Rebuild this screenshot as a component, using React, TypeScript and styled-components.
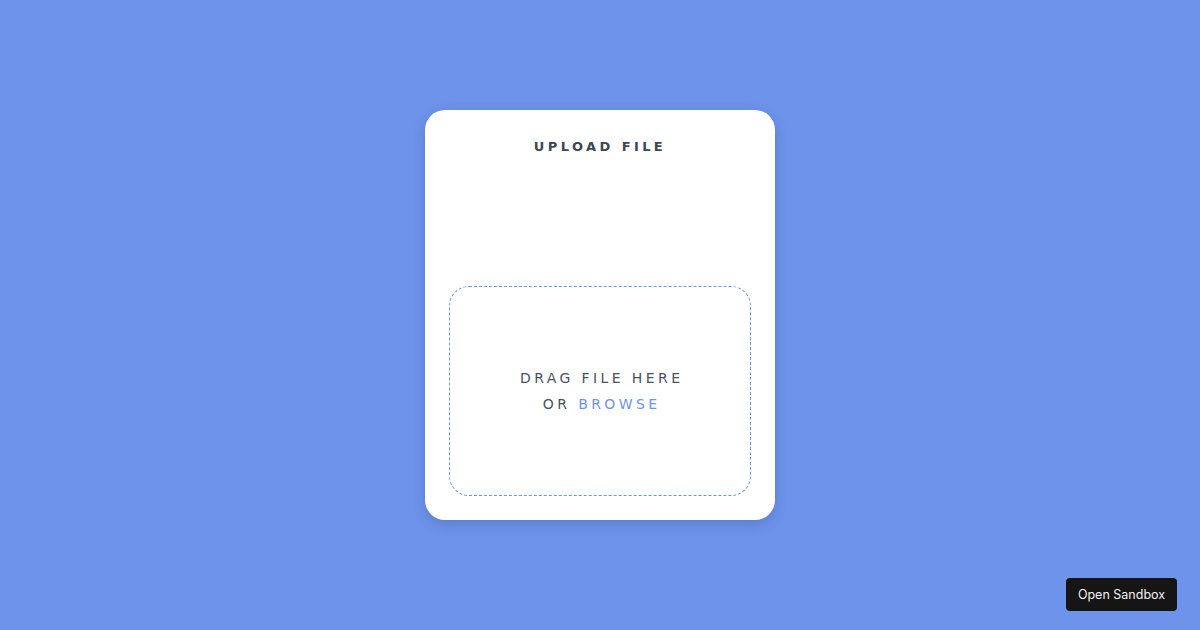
import React from "react";
import styled, { createGlobalStyle } from "styled-components";

const Global = createGlobalStyle`
  html, body {
    margin: 0;
    padding: 0;
    height: 100%;
  }
  body {
    background: #6d93ea;
    font-family: "DejaVu Sans", "Open Sans", sans-serif;
  }
  #root {
    height: 100%;
  }
`;

const Page = styled.div`
  height: 100vh;
  display: flex;
  align-items: center;
  justify-content: center;
  position: relative;
`;

const Card = styled.div`
  width: 350px;
  height: 410px;
  box-sizing: border-box;
  background: #fff;
  border-radius: 20px;
  box-shadow: 0 4px 12px rgba(40, 60, 120, 0.25);
  padding: 28px 24px 24px;
  display: flex;
  flex-direction: column;
`;

const Title = styled.h1`
  margin: 0;
  text-align: center;
  font-size: 13px;
  font-weight: 700;
  letter-spacing: 3.4px;
  color: #3e4654;
  line-height: 18px;
`;

const DropZone = styled.div`
  margin-top: auto;
  height: 210px;
  box-sizing: border-box;
  border: 1px dashed #6d93ea;
  border-radius: 20px;
  display: flex;
  flex-direction: column;
  align-items: center;
  justify-content: center;
  text-align: center;
`;

const Line = styled.div`
  font-size: 14px;
  font-weight: 400;
  letter-spacing: 3.4px;
  line-height: 26px;
  color: #4a5160;
  padding-left: 3.4px;
`;

const Browse = styled.span`
  color: #6d93ea;
`;

const SandboxButton = styled.button`
  position: absolute;
  right: 23px;
  bottom: 19px;
  width: 111px;
  height: 33px;
  border: none;
  border-radius: 4px;
  background: #151515;
  color: #f2f2f2;
  font-family: Inter, "Liberation Sans", sans-serif;
  font-size: 12.5px;
  cursor: pointer;
`;

export default function App() {
  return (
    <>
      <Global />
      <Page>
        <Card>
          <Title>UPLOAD FILE</Title>
          <DropZone>
            <Line>DRAG FILE HERE</Line>
            <Line>
              OR <Browse>BROWSE</Browse>
            </Line>
          </DropZone>
        </Card>
        <SandboxButton>Open Sandbox</SandboxButton>
      </Page>
    </>
  );
}
